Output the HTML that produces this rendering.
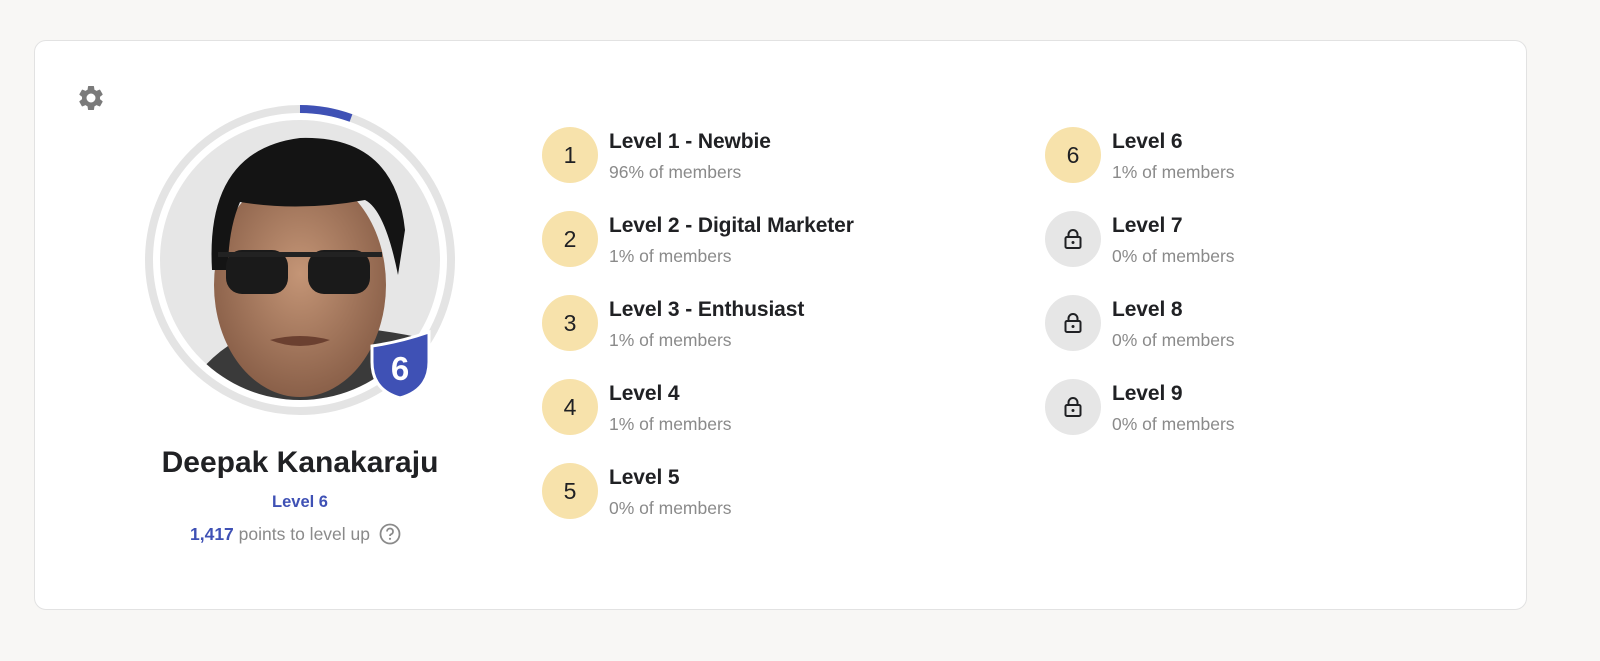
<!DOCTYPE html>
<html><head><style>
body{margin:0;width:1600px;height:661px;background:#f8f7f5;font-family:"Liberation Sans",Arial,sans-serif;position:relative;overflow:hidden}
.card{position:absolute;left:34px;top:40px;width:1491px;height:568px;background:#fff;border:1px solid #e2e2e2;border-radius:12px}
.lv{position:absolute;height:60px}
.c{position:absolute;left:0;top:0;width:56px;height:56px;border-radius:50%;background:#f7e2ab;color:#202124;font-size:23px;line-height:56px;text-align:center}
.c.g{background:#e6e6e6}
.t{position:absolute;left:67px;top:3px;font-size:21px;font-weight:bold;color:#202124;white-space:nowrap;letter-spacing:-0.1px}
.s{position:absolute;left:67px;top:35px;font-size:17.5px;color:#8a8a8a;white-space:nowrap}
</style></head><body>
<div class="card"></div>
<svg style="position:absolute;left:76px;top:83px" width="30" height="30" viewBox="0 0 24 24"><path fill="#7a7a7a" d="M19.14 12.94c.04-.3.06-.61.06-.94 0-.32-.02-.64-.07-.94l2.03-1.58a.49.49 0 0 0 .12-.61l-1.920-3.32a.49.49 0 0 0-.59-.22l-2.39.96c-.5-.38-1.03-.7-1.62-.94l-.36-2.54a.48.48 0 0 0-.48-.41h-3.84c-.24 0-.43.17-.47.41l-.36 2.54c-.59.24-1.130.57-1.62.94l-2.39-.96a.48.48 0 0 0-.59.22L2.74 8.87c-.12.21-.08.47.12.61l2.03 1.58c-.05.3-.09.63-.09.94s.02.64.07.94l-2.03 1.58a.49.49 0 0 0-.12.61l1.92 3.32c.12.22.37.29.59.22l2.39-.96c.5.38 1.03.7 1.62.94l.36 2.54c.05.24.24.41.48.41h3.84c.24 0 .44-.17.47-.41l.36-2.54c.59-.24 1.13-.56 1.62-.94l2.39.96c.22.08.47 0 .59-.22l1.92-3.32c.12-.22.07-.47-.12-.61l-2.01-1.58zM12 15.6A3.6 3.6 0 1 1 12 8.4a3.6 3.6 0 0 1 0 7.2z"/></svg>
<svg style="position:absolute;left:140px;top:100px" width="320" height="320" viewBox="0 0 320 320">
<defs><clipPath id="cp"><circle cx="160" cy="160" r="140"/></clipPath>
<radialGradient id="sk" cx="50%" cy="45%" r="55%"><stop offset="0" stop-color="#c49576"/><stop offset="1" stop-color="#8a6049"/></radialGradient></defs>
<circle cx="160" cy="160" r="151" fill="none" stroke="#e4e4e4" stroke-width="8"/>
<path d="M160 9 A151 151 0 0 1 211 18" fill="none" stroke="#3f51b5" stroke-width="8"/>
<g clip-path="url(#cp)">
<rect width="320" height="320" fill="#e6e6e6"/>
<path d="M40 300 Q80 230 150 225 Q230 225 290 240 L300 320 L40 320Z" fill="#3a3a3a"/>
<ellipse cx="160" cy="185" rx="86" ry="112" fill="url(#sk)"/>
<path d="M72 170 Q65 50 160 38 Q255 35 265 130 L258 175 Q245 110 225 100 Q160 112 100 102 Q88 130 88 170Z" fill="#141414"/>
<rect x="86" y="150" width="62" height="44" rx="16" fill="#1a1a1a"/>
<rect x="168" y="150" width="62" height="44" rx="16" fill="#1a1a1a"/>
<rect x="78" y="152" width="164" height="5" fill="#222"/>
<path d="M130 240 Q160 232 190 240 Q160 252 130 240Z" fill="#6b4030"/>
</g>
<path d="M232 246 Q260 242 289 232 L289 262 Q289 290 260 298 Q232 290 232 262Z" fill="#3f51b5" stroke="#fff" stroke-width="3"/>
<text x="260" y="280" font-size="33" font-weight="bold" fill="#fff" text-anchor="middle" font-family="Liberation Sans,sans-serif">6</text>
</svg>
<div style="position:absolute;left:100px;width:400px;top:446px;text-align:center;font-size:30px;font-weight:bold;color:#202124">Deepak Kanakaraju</div>
<div style="position:absolute;left:100px;width:400px;top:493px;text-align:center;font-size:16.5px;font-weight:bold;color:#3f51b5">Level 6</div>
<div style="position:absolute;left:190px;top:523px;font-size:17.5px;color:#8a8a8a;white-space:nowrap"><b style="color:#3f51b5">1,417</b> points to level up <svg style="vertical-align:-5px;margin-left:4px" width="22" height="22" viewBox="0 0 22 22"><circle cx="11" cy="11" r="9.5" fill="none" stroke="#8a8a8a" stroke-width="1.8"/><path d="M8 8.5a3 3 0 1 1 4 2.8c-.8.4-1 .9-1 1.7" fill="none" stroke="#8a8a8a" stroke-width="1.8"/><circle cx="11" cy="15.8" r="1.1" fill="#8a8a8a"/></svg></div>

<div class="lv" style="left:542px;top:127px"><div class="c">1</div><div class="t">Level 1 - Newbie</div><div class="s">96% of members</div></div>
<div class="lv" style="left:542px;top:211px"><div class="c">2</div><div class="t">Level 2 - Digital Marketer</div><div class="s">1% of members</div></div>
<div class="lv" style="left:542px;top:295px"><div class="c">3</div><div class="t">Level 3 - Enthusiast</div><div class="s">1% of members</div></div>
<div class="lv" style="left:542px;top:379px"><div class="c">4</div><div class="t">Level 4</div><div class="s">1% of members</div></div>
<div class="lv" style="left:542px;top:463px"><div class="c">5</div><div class="t">Level 5</div><div class="s">0% of members</div></div>

<div class="lv" style="left:1045px;top:127px"><div class="c">6</div><div class="t">Level 6</div><div class="s">1% of members</div></div>
<div class="lv" style="left:1045px;top:211px"><div class="c g"><svg style="margin-top:17px" width="20" height="22" viewBox="0 0 20 22"><path d="M5.5 9V6.5a4.5 4.5 0 0 1 9 0V9" fill="none" stroke="#202124" stroke-width="2"/><rect x="2.5" y="9" width="15" height="11" rx="1.5" fill="none" stroke="#202124" stroke-width="2"/><circle cx="10" cy="14.5" r="1.5" fill="#202124"/></svg></div><div class="t">Level 7</div><div class="s">0% of members</div></div>
<div class="lv" style="left:1045px;top:295px"><div class="c g"><svg style="margin-top:17px" width="20" height="22" viewBox="0 0 20 22"><path d="M5.5 9V6.5a4.5 4.5 0 0 1 9 0V9" fill="none" stroke="#202124" stroke-width="2"/><rect x="2.5" y="9" width="15" height="11" rx="1.5" fill="none" stroke="#202124" stroke-width="2"/><circle cx="10" cy="14.5" r="1.5" fill="#202124"/></svg></div><div class="t">Level 8</div><div class="s">0% of members</div></div>
<div class="lv" style="left:1045px;top:379px"><div class="c g"><svg style="margin-top:17px" width="20" height="22" viewBox="0 0 20 22"><path d="M5.5 9V6.5a4.5 4.5 0 0 1 9 0V9" fill="none" stroke="#202124" stroke-width="2"/><rect x="2.5" y="9" width="15" height="11" rx="1.5" fill="none" stroke="#202124" stroke-width="2"/><circle cx="10" cy="14.5" r="1.5" fill="#202124"/></svg></div><div class="t">Level 9</div><div class="s">0% of members</div></div>
</body></html>
